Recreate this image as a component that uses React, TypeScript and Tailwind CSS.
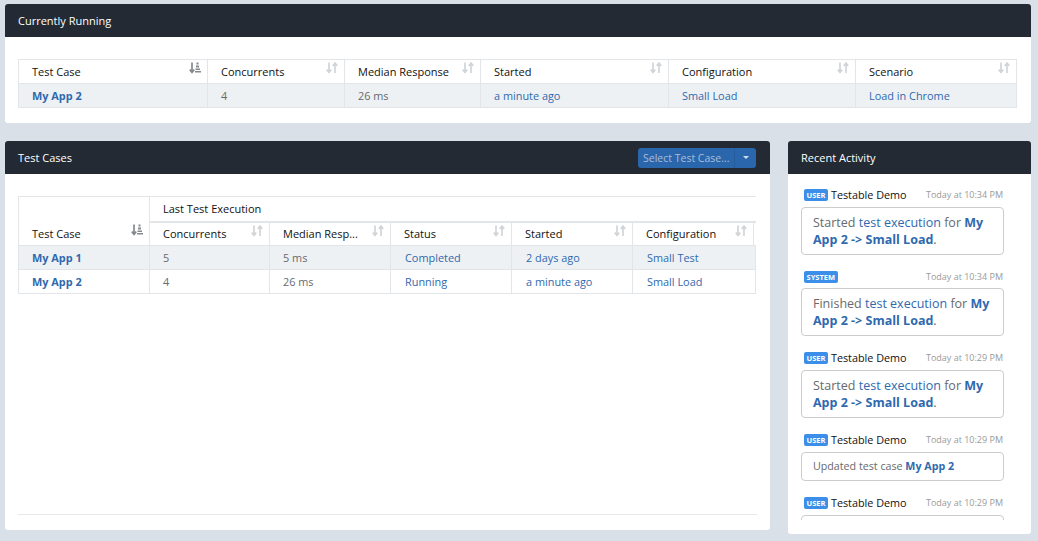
import type { ReactNode } from 'react';

const SortIcon = ({ active = false }: { active?: boolean }) => (
  <svg width="12" height="12" viewBox="0 0 12 12" className={active ? 'text-[#85898e]' : 'text-[#d2d5d8]'}>
    <path d="M3 0.5v9.5M0.8 7.6L3 10.4l2.2-2.8" fill="none" stroke="currentColor" strokeWidth="1.7" />
    {active ? (
      <path d="M7.5 0.5h2v2h-2zM7 3.5h3v2H7zM6.5 6.5h4.5v1.6H6.5zM6 9h6v1.6H6z" fill="currentColor" />
    ) : (
      <path d="M9 11v-9.5M6.8 3.9L9 1.1l2.2 2.8" fill="none" stroke="currentColor" strokeWidth="1.7" />
    )}
  </svg>
);

const Panel = ({ title, action, className, children }: { title: string; action?: ReactNode; className: string; children: ReactNode }) => (
  <div className={`bg-white rounded-[3px] overflow-hidden ${className}`}>
    <div className="h-[33px] bg-[#232a33] flex items-center justify-between pl-[13px] pr-[14px]">
      <span className="text-white text-[11px] font-medium pt-px">{title}</span>
      {action}
    </div>
    {children}
  </div>
);

const Th = ({ label, active, rowSpan }: { label: string; active?: boolean; rowSpan?: number }) => (
  <th rowSpan={rowSpan} className="relative border border-[#e3e6e9] pl-[13px] pr-6 h-6 align-bottom pb-[3px] text-left text-[11px] font-medium text-[#111] whitespace-nowrap">
    {label}
    <span className={`absolute right-[6px] ${rowSpan ? 'bottom-[9px]' : 'top-[2px]'} flex`}>
      <SortIcon active={active} />
    </span>
  </th>
);

const Td = ({ children, link, strong, shift, span }: { children: ReactNode; link?: boolean; strong?: boolean; shift?: boolean; span?: number }) => (
  <td colSpan={span} className={`border border-[#e3e6e9] h-6 pt-px text-[10.9px] whitespace-nowrap ${shift ? 'pl-[14px]' : 'pl-[13px]'} ${link || strong ? 'text-[#2f69ae]' : 'text-[#676a6c]'} ${strong ? 'font-bold' : ''}`}>
    {children}
  </td>
);

const activity = [
  { tag: 'USER', name: 'Testable Demo', time: 'Today at 10:34 PM', verb: 'Started' },
  { tag: 'SYSTEM', name: '', time: 'Today at 10:34 PM', verb: 'Finished' },
  { tag: 'USER', name: 'Testable Demo', time: 'Today at 10:29 PM', verb: 'Started' },
];

const ActivityHead = ({ tag, name, time }: { tag: string; name: string; time: string }) => (
  <div className={`flex items-center justify-between pl-[3px] pr-px mb-[5px] ${name ? 'h-[14px]' : 'h-[13px]'}`}>
    <div className="flex items-center gap-[3px]">
      <span className="bg-[#3b8fe8] text-white text-[7.5px] font-bold leading-[12px] px-[2.5px] rounded-[2px]">{tag}</span>
      <span className="text-[10.8px] text-[#111]">{name}</span>
    </div>
    <span className="text-[9px] text-[#9a9a9a]">{time}</span>
  </div>
);

export default function App() {
  return (
    <div className="w-[1038px] h-[541px] overflow-hidden bg-[#d9e0e7] pt-1 pl-[5px] pr-[7px] [font-family:'Open_Sans',sans-serif]">
      <Panel title="Currently Running" className="h-[119px]">
        <div className="pt-[22px] px-[13px]">
          <table className="w-[998px] table-fixed border-collapse">
            <colgroup>
              <col className="w-[189px]" />
              <col className="w-[137px]" />
              <col className="w-[136px]" />
              <col className="w-[188px]" />
              <col className="w-[187px]" />
              <col className="w-[161px]" />
            </colgroup>
            <thead>
              <tr>
                <Th label="Test Case" active />
                <Th label="Concurrents" />
                <Th label="Median Response" />
                <Th label="Started" />
                <Th label="Configuration" />
                <Th label="Scenario" />
              </tr>
            </thead>
            <tbody>
              <tr className="bg-[#eef1f4]">
                <Td strong>My App 2</Td>
                <Td>4</Td>
                <Td>26 ms</Td>
                <Td link>a minute ago</Td>
                <Td link>Small Load</Td>
                <Td link>Load in Chrome</Td>
              </tr>
            </tbody>
          </table>
        </div>
      </Panel>

      <div className="flex gap-[18px] mt-[18px] items-start">
        <Panel
          title="Test Cases"
          className="w-[765px] h-[389px]"
          action={
            <div className="flex h-5 bg-[#2a66ab] rounded-[3px] text-[#a9bdd6] text-[10.5px] leading-5">
              <span className="w-[96px] pl-[5px] whitespace-nowrap">Select Test Case...</span>
              <span className="w-[22px] border-l border-[#245c9c] flex items-center justify-center">
                <span className="border-x-[3px] border-x-transparent border-t-[3px] border-t-[#d3deeb]" />
              </span>
            </div>
          }
        >
          <div className="pt-[22px] px-[13px]">
            <table className="w-[737px] table-fixed border-collapse border-b border-[#e3e6e9]">
              <colgroup>
                <col className="w-[131px]" />
                <col className="w-[120px]" />
                <col className="w-[121px]" />
                <col className="w-[121px]" />
                <col className="w-[121px]" />
                <col className="w-[121px]" />
                <col className="w-[2px]" />
              </colgroup>
              <thead>
                <tr>
                  <Th label="Test Case" active rowSpan={2} />
                  <th colSpan={6} className="border-t border-b-2 border-[#e3e6e9] pl-[13px] pt-px h-[25px] text-left text-[11px] font-medium text-[#111]">
                    Last Test Execution
                  </th>
                </tr>
                <tr>
                  <Th label="Concurrents" />
                  <Th label="Median Resp..." />
                  <Th label="Status" />
                  <Th label="Started" />
                  <Th label="Configuration" />
                  <th className="border-b border-[#e3e6e9]" />
                </tr>
              </thead>
              <tbody>
                <tr className="bg-[#eef1f4]">
                  <Td strong>My App 1</Td>
                  <Td>5</Td>
                  <Td>5 ms</Td>
                  <Td link shift>Completed</Td>
                  <Td link shift>2 days ago</Td>
                  <Td link shift span={2}>Small Test</Td>
                </tr>
                <tr>
                  <Td strong>My App 2</Td>
                  <Td>4</Td>
                  <Td>26 ms</Td>
                  <Td link shift>Running</Td>
                  <Td link shift>a minute ago</Td>
                  <Td link shift span={2}>Small Load</Td>
                </tr>
              </tbody>
            </table>
            <div className="mt-[220px] border-t border-[#e8e8e8]" />
          </div>
        </Panel>

        <Panel title="Recent Activity" className="w-[243px] h-[393px]">
          <div className="h-[332px] overflow-hidden mt-[14px] pl-[13px] pr-[27px]">
            {activity.map((a, i) => (
              <div key={i} className="mb-[15px]">
                <ActivityHead tag={a.tag} name={a.name} time={a.time} />
                <div className="h-[48px] border border-[#ccc] rounded-[4px] pl-[11px] pr-2 pt-[6px] text-[12.5px] leading-[17px] text-[#676a6c]">
                  {a.verb} <span className="text-[#2f69ae]">test execution</span> for <b className="text-[#2f69ae]">My App 2 -&gt; Small Load</b>.
                </div>
              </div>
            ))}
            <div className="mb-[15px]">
              <ActivityHead tag="USER" name="Testable Demo" time="Today at 10:29 PM" />
              <div className="h-[29px] border border-[#ccc] rounded-[4px] pl-[11px] flex items-center text-[10.7px] text-[#676a6c] whitespace-pre">
                Updated test case <b className="text-[#2f69ae]">My App 2</b>
              </div>
            </div>
            <div>
              <ActivityHead tag="USER" name="Testable Demo" time="Today at 10:29 PM" />
              <div className="h-[29px] border border-[#ccc] rounded-[4px]" />
            </div>
          </div>
        </Panel>
      </div>
    </div>
  );
}
